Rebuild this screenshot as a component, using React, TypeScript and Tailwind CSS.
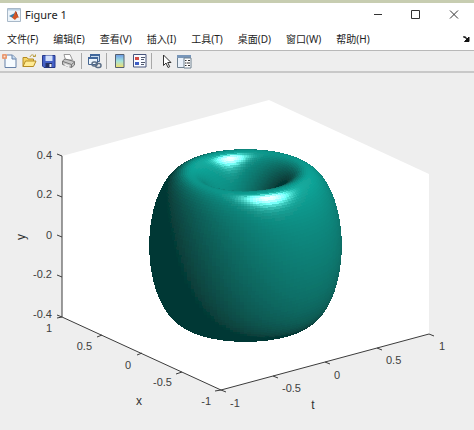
import type { ReactNode } from "react"

const menus = ["文件(F)", "编辑(E)", "查看(V)", "插入(I)", "工具(T)", "桌面(D)", "窗口(W)", "帮助(H)"]

const uiFont = "font-['Noto_Sans','Noto_Sans_CJK_SC',sans-serif]"

// surface of revolution, drawn inside a unit cube seen from az -37.5, el 30
const MAJOR = 0.45
const MINOR = 0.285
const HEIGHT = 0.369
const CENTER = { x: 245.5, y: 245.5 }
const SCALE = { x: 262, y: 186 }
const LIGHT = [0.433, 0.5, 0.75]
const BASE = [20, 188, 174]

type Point = { x: number; y: number; z: number }

function toCamera(a: number, b: number, up: number): Point {
  // a points right, b points away from the camera on the floor plane
  return { x: a, y: b * 0.5 + up * 0.866, z: -b * 0.866 + up * 0.5 }
}

function surfacePoint(theta: number, phi: number): Point {
  const radius = (MAJOR + MINOR * Math.cos(phi)) / 2
  return toCamera(radius * Math.cos(theta), radius * Math.sin(theta), HEIGHT * Math.sin(phi) * 1.25)
}

function surfaceNormal(theta: number, phi: number): Point {
  const side = (Math.cos(phi) * 2) / MINOR
  const up = Math.sin(phi) / 1.25 / HEIGHT
  const len = Math.hypot(side, up)
  return toCamera((side * Math.cos(theta)) / len, (side * Math.sin(theta)) / len, up / len)
}

function shade(n: Point) {
  const dot = n.x * LIGHT[0] + n.y * LIGHT[1] + n.z * LIGHT[2]
  const diffuse = Math.max(0, dot)
  const reflected = 2 * dot * n.z - LIGHT[2]
  const specular = dot > 0 ? 0.9 * Math.pow(Math.max(0, reflected), 10) : 0
  const rgb = BASE.map((c) => Math.min(255, Math.round(c * (0.3 + 0.6 * diffuse) + 255 * specular)))
  return `rgb(${rgb.join(",")})`
}

function buildFaces() {
  const around = 150
  const across = 120
  const faces: { points: string; color: string; depth: number }[] = []
  for (let i = 0; i < around; i++) {
    for (let j = 0; j < across; j++) {
      const t0 = (i / around) * Math.PI * 2
      const t1 = ((i + 1) / around) * Math.PI * 2
      const p0 = (j / across) * Math.PI * 2
      const p1 = ((j + 1) / across) * Math.PI * 2
      const normal = surfaceNormal((t0 + t1) / 2, (p0 + p1) / 2)
      if (normal.z < -0.04) continue
      const corners = [surfacePoint(t0, p0), surfacePoint(t1, p0), surfacePoint(t1, p1), surfacePoint(t0, p1)]
      faces.push({
        points: corners
          .map((c) => `${(CENTER.x + c.x * SCALE.x).toFixed(2)},${(CENTER.y - c.y * SCALE.y).toFixed(2)}`)
          .join(" "),
        color: shade(normal),
        depth: corners.reduce((sum, c) => sum + c.z, 0),
      })
    }
  }
  return faces.sort((a, b) => a.depth - b.depth)
}

const faces = buildFaces()

const labels = [
  { x: 52, y: 159, text: "0.4", anchor: "end" },
  { x: 52, y: 198, text: "0.2", anchor: "end" },
  { x: 52, y: 239, text: "0", anchor: "end" },
  { x: 52, y: 278, text: "-0.2", anchor: "end" },
  { x: 52, y: 318, text: "-0.4", anchor: "end" },
  { x: 52, y: 332, text: "1", anchor: "end" },
  { x: 92, y: 350, text: "0.5", anchor: "end" },
  { x: 131, y: 369, text: "0", anchor: "end" },
  { x: 172, y: 386, text: "-0.5", anchor: "end" },
  { x: 211, y: 405, text: "-1", anchor: "end" },
  { x: 230, y: 407, text: "-1", anchor: "start" },
  { x: 282, y: 392, text: "-0.5", anchor: "start" },
  { x: 334, y: 379, text: "0", anchor: "start" },
  { x: 386, y: 364, text: "0.5", anchor: "start" },
  { x: 439, y: 350, text: "1", anchor: "start" },
] as const

function Plot() {
  return (
    <svg viewBox="0 73 474 357" className="block w-full" role="img" aria-label="3-D surface plot">
      <defs>
        {/* evens out the stepped edges of the unsmoothed faces */}
        <filter id="smooth">
          <feGaussianBlur stdDeviation="0.5" />
        </filter>
      </defs>
      <polygon points="62,156 269,100 429,174 429,334 221,390 62,317" fill="#fff" />
      <g shapeRendering="crispEdges" filter="url(#smooth)">
        {faces.map((face, i) => (
          <polygon key={i} points={face.points} fill={face.color} />
        ))}
      </g>
      <path
        d="M62 156V317L221 390L429 334M62 156l-5-2M62 197l-5-2M62 237l-5-2M62 277l-5-2M62 317l-5-2M62 317l-5 1M102 335l-5 2M142 353l-5 2M182 372l-6 2M221 390l-6 1M221 390l5 2M273 376l5 2M325 362l5 2M377 348l5 2M429 334l5 2"
        fill="none"
        stroke="#3c3c3c"
        strokeWidth="1"
      />
      <g className="font-['Liberation_Sans',sans-serif] text-[11px]" fill="#404040">
        {labels.map((label) => (
          <text key={`${label.x}-${label.y}`} x={label.x} y={label.y} textAnchor={label.anchor}>
            {label.text}
          </text>
        ))}
      </g>
      <g className="font-['Liberation_Sans',sans-serif] text-[12px]" fill="#303030" textAnchor="middle">
        <text x="139" y="405">x</text>
        <text x="313" y="409">t</text>
        <text x="25" y="237" transform="rotate(-90 25 237)">y</text>
      </g>
    </svg>
  )
}

function ToolButton({ label, children }: { label: string; children: ReactNode }) {
  return (
    <button type="button" aria-label={label} className="flex h-4 w-4 shrink-0 items-center justify-center">
      <svg viewBox="0 0 16 16" className="h-4 w-4">
        {children}
      </svg>
    </button>
  )
}

function Separator() {
  return <div className="h-4 w-px shrink-0 bg-[#a8a8a8]" />
}

function Toolbar() {
  return (
    <div className="flex h-[22px] items-center gap-1 border-b-2 border-[#c8c8c8] bg-[#eeeeee] pl-px" role="toolbar">
      <ToolButton label="New figure">
        <path d="M4 2h7.500l3.500 3.500V14.500H4z" fill="#f6fbff" stroke="#6681a8" />
        <path d="M11 2v4h4" fill="#c9def2" stroke="#6681a8" />
        <path d="M1 1h5v5H1z" fill="#f3b08c" />
        <path d="M2 2h3v3H2z" fill="#fbe3d2" stroke="#e08458" />
      </ToolButton>
      <ToolButton label="Open">
        <path d="M2 13.500V4.500h4l1 1.500h5.500v3" fill="#f5d565" stroke="#b58b22" />
        <path d="M2 13.500L4.500 8H15l-2.500 5.500z" fill="#ffeb94" stroke="#b58b22" />
        <path d="M9 4c1-3 4-2.500 4.500-.5M12 3.500h2.500V1.500" fill="none" stroke="#b89b3b" />
      </ToolButton>
      <ToolButton label="Save">
        <path d="M1.500 2.500h12.500V14.500H3L1.500 13z" fill="#4561c5" stroke="#26398c" />
        <path d="M4.500 2.500h7v5.500h-7z" fill="#d3e0fa" />
        <path d="M4.500 10h6.500v4.500H4.500z" fill="#243165" />
        <path d="M8.500 11h2v3h-2z" fill="#eef1fb" />
      </ToolButton>
      <ToolButton label="Print">
        <path d="M4.500 7L3 1.500h6L11.500 7z" fill="#fff" stroke="#999" />
        <path d="M1.500 8L4 6l9.500 2.500V12l-3 2.500L1.500 11.500z" fill="#c8c8c8" stroke="#777" />
        <path d="M2 8.500l8.500 3L13.500 9M10.500 11.500v3" fill="none" stroke="#777" />
        <path d="M3.500 11.500l5 2" stroke="#f4f4f4" strokeWidth="1.500" />
      </ToolButton>
      <Separator />
      <ToolButton label="Link plot">
        <path d="M4.500 1.500h9v7h-9z" fill="#c5d9ee" stroke="#46658f" />
        <path d="M2.500 4.500h9v7h-9z" fill="#edf5fd" stroke="#46658f" />
        <path d="M2 4h10v2H2zM4 1h10v2H4z" fill="#3f659b" />
        <g fill="none" stroke="#5c6f87" strokeWidth="1.500">
          <rect x="6" y="9" width="5" height="4" rx="2" />
          <rect x="9.500" y="10.500" width="5.500" height="4" rx="2" />
        </g>
      </ToolButton>
      <Separator />
      <ToolButton label="Insert colorbar">
        <defs>
          <linearGradient id="bar" x1="0" y1="0" x2="0" y2="1">
            <stop offset="0" stopColor="#6b9be8" />
            <stop offset="0.5" stopColor="#a4e3dc" />
            <stop offset="1" stopColor="#f4df67" />
          </linearGradient>
        </defs>
        <path d="M4.500 1.500h8.500v13H4.500z" fill="url(#bar)" stroke="#55606f" />
      </ToolButton>
      <ToolButton label="Insert legend">
        <path d="M2.500 1.500H15v12.500H2.500z" fill="#f8faff" stroke="#46547c" />
        <path d="M4 4h4v3H4z" fill="#d34b45" />
        <path d="M4 9h4v3H4z" fill="#3d5dc5" />
        <path d="M10 4.500h4M10 6.500h3M10 9.500h4M10 11.500h3" stroke="#4d566c" />
      </ToolButton>
      <Separator />
      <div className="ml-1 flex items-center">
        <ToolButton label="Edit plot">
          <path d="M3.500 2v10.500L6 10l2 4.500 1.700-.8-2-4.200H11z" fill="#fff" stroke="#333" />
        </ToolButton>
        <ToolButton label="Property inspector">
          <path d="M1.500 2.500h13v12h-13z" fill="#e9f1fa" stroke="#6f8190" />
          <path d="M1 2h14v3H1z" fill="#7896b9" />
          <path d="M8 5h7v10H8z" fill="#fff" stroke="#6f8190" />
          <path d="M9 7.500h1.500M12 7.500h2M9 10h1.500M11 10h3M9 12.500h1.500M12 12.500h2" stroke="#333" />
        </ToolButton>
      </div>
    </div>
  )
}

function TitleBar() {
  return (
    <header className={`flex h-6 items-center bg-white pl-[7px] pr-3 ${uiFont}`}>
      <svg viewBox="0 0 14 14" className="mr-1 h-3.5 w-3.5 shrink-0" aria-hidden="true">
        <path d="M.5.5h13v13H.5z" fill="#edf4fa" stroke="#a8b8c8" />
        <path d="M1 1h12v1.500H1z" fill="#b9cfe2" />
        <path d="M2 8l3-1.500 2-1 1.500-2-2 7L5 9.500z" fill="#397ba7" />
        <path d="M8.500 3c1.500 1 2 5.500 4 7-2-1-3 0-4.500 2L5 9.500C7 8 7.500 5 8.500 3z" fill="#d45525" />
        <path d="M8.500 3c1.500 1 2 5.500 4 7-2-2-3-3-4-7z" fill="#852e22" />
      </svg>
      <h1 className="flex-1 text-[11px] leading-4 text-[#222]">Figure 1</h1>
      <div className="flex gap-[22px]">
        <button type="button" aria-label="Minimize" className="h-4 w-4">
          <svg viewBox="0 0 16 16"><path d="M4 7.500h8" stroke="#333" /></svg>
        </button>
        <button type="button" aria-label="Maximize" className="h-4 w-4">
          <svg viewBox="0 0 16 16"><path d="M3.500 3.500h8v8h-8z" fill="none" stroke="#333" /></svg>
        </button>
        <button type="button" aria-label="Close" className="h-4 w-4">
          <svg viewBox="0 0 16 16"><path d="M4 3.500l8 8M12 3.500l-8 8" stroke="#333" /></svg>
        </button>
      </div>
    </header>
  )
}

export default function App() {
  return (
    <main className="min-h-screen border-t-[3px] border-[#c7cdb1] bg-[#eeeeee]">
      <TitleBar />
      <nav className={`flex h-6 items-center gap-[15px] border-b border-[#b8b8b8] bg-white pl-[7px] pr-1 text-[10px] leading-4 text-[#222] ${uiFont}`}>
        {menus.map((menu) => (
          <button key={menu} type="button" className="shrink-0 whitespace-nowrap">
            {menu}
          </button>
        ))}
        <button type="button" aria-label="Dock figure" className="ml-auto h-2 w-2">
          <svg viewBox="0 0 8 8"><path d="M1 2c2-1 3 0 5 3M7 2v4.500H2.500z" fill="#111" stroke="#111" /></svg>
        </button>
      </nav>
      <Toolbar />
      <Plot />
    </main>
  )
}
